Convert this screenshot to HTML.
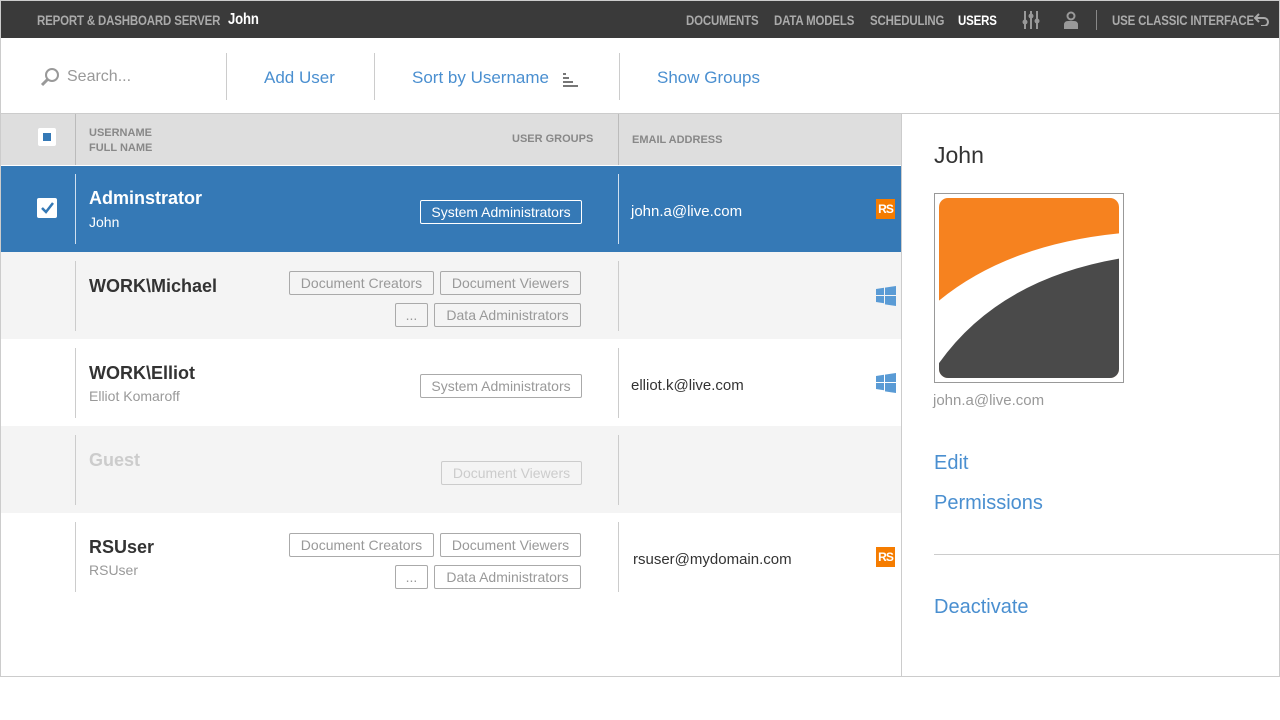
<!DOCTYPE html>
<html><head><style>
*{margin:0;padding:0;box-sizing:border-box}
body{width:1280px;height:720px;background:#fff;font-family:"Liberation Sans",sans-serif;position:relative;overflow:hidden}
.a{position:absolute;white-space:nowrap}
.nav{font-weight:bold;font-size:14px;color:#aaa;top:12px;transform:scaleX(0.82);transform-origin:0 0;letter-spacing:-0.2px}
.tb{font-size:17px;color:#4a8fd0;top:68px}
.vl{position:absolute;width:1px;background:#ccc}
.hd{font-size:11px;font-weight:bold;color:#888}
.tag{position:absolute;height:24px;border:1px solid #aaa;border-radius:2px;font-size:14px;color:#999;line-height:22px;text-align:center;background:transparent}
.un{font-size:18px;font-weight:bold;color:#333}
.fn{font-size:14px;color:#999}
.em{font-size:15px;color:#333}
</style></head><body>
<div class="a" style="left:0;top:0;width:1280px;height:677px;border:1px solid #ccc"></div>
<div class="a" style="left:1px;top:1px;width:1278px;height:37px;background:#3a3a3a"></div>
<div class="a nav" style="left:37px">REPORT &amp; DASHBOARD SERVER</div>
<div class="a nav" style="left:228px;color:#fff;font-size:16px;top:11px">John</div>
<div class="a nav" style="left:686px">DOCUMENTS</div>
<div class="a nav" style="left:774px">DATA MODELS</div>
<div class="a nav" style="left:870px">SCHEDULING</div>
<div class="a nav" style="left:958px;color:#fff">USERS</div>
<svg class="a" style="left:1021px;top:11px" width="20" height="18" viewBox="0 0 20 18" fill="#999"><rect x="3" y="0" width="2" height="18"/><rect x="9" y="0" width="2" height="18"/><rect x="15" y="0" width="2" height="18"/><circle cx="4" cy="11" r="2.5"/><circle cx="10" cy="5" r="2.5"/><circle cx="16" cy="10" r="2.5"/></svg>
<svg class="a" style="left:1063px;top:11px" width="16" height="18" viewBox="0 0 16 18" fill="#999"><circle cx="8" cy="5" r="3.5" fill="none" stroke="#999" stroke-width="2"/><path d="M1 18v-4q0-4 4-4h6q4 0 4 4v4z"/></svg>
<div class="a" style="left:1096px;top:10px;width:1px;height:20px;background:#888"></div>
<div class="a nav" style="left:1112px">USE CLASSIC INTERFACE</div>
<svg class="a" style="left:1254px;top:13px" width="16" height="13" viewBox="0 0 16 13"><path d="M5 1L1 5l4 4M1 5h9a4 4 0 010 8H7" fill="none" stroke="#aaa" stroke-width="2"/></svg>

<svg class="a" style="left:40px;top:67px" width="20" height="20" viewBox="0 0 20 20"><circle cx="12" cy="8" r="6" fill="none" stroke="#999" stroke-width="2"/><path d="M8 12l-6 6" stroke="#999" stroke-width="3"/></svg>
<div class="a" style="left:67px;top:68px;font-size:16px;color:#999">Search...</div>
<div class="vl" style="left:226px;top:53px;height:47px"></div>
<div class="a tb" style="left:264px">Add User</div>
<div class="vl" style="left:374px;top:53px;height:47px"></div>
<div class="a tb" style="left:412px">Sort by Username</div>
<svg class="a" style="left:563px;top:73px" width="16" height="14" fill="#777"><rect x="0" y="0" width="3" height="2"/><rect x="0" y="4" width="6" height="2"/><rect x="0" y="8" width="10" height="2"/><rect x="0" y="12" width="15" height="2"/></svg>
<div class="vl" style="left:619px;top:53px;height:47px"></div>
<div class="a tb" style="left:657px">Show Groups</div>
<div class="a" style="left:1px;top:113px;width:1278px;height:1px;background:#ccc"></div>

<div class="a" style="left:1px;top:114px;width:900px;height:51px;background:#dedede"></div>
<div class="a" style="left:38px;top:128px;width:18px;height:18px;background:#fff;border-radius:2px"></div>
<div class="a" style="left:43px;top:133px;width:8px;height:8px;background:#3579b6"></div>
<div class="vl" style="left:75px;top:114px;height:51px;background:#bbb"></div>
<div class="a hd" style="left:89px;top:126px;line-height:15px">USERNAME<br>FULL NAME</div>
<div class="a hd" style="left:512px;top:133px">USER GROUPS</div>
<div class="vl" style="left:618px;top:114px;height:51px;background:#bbb"></div>
<div class="a hd" style="left:632px;top:134px">EMAIL ADDRESS</div>

<div class="a" style="left:1px;top:166px;width:900px;height:86px;background:#3579b6"></div>
<div class="a" style="left:37px;top:198px;width:20px;height:20px;background:#fff;border-radius:2px"></div>
<svg class="a" style="left:39px;top:200px" width="16" height="16"><path d="M3 8l4 4 7-9" fill="none" stroke="#3579b6" stroke-width="2.5"/></svg>
<div class="vl" style="left:75px;top:174px;height:70px;background:#cfe0f0"></div>
<div class="a un" style="left:89px;top:188px;color:#fff">Adminstrator</div>
<div class="a fn" style="left:89px;top:214px;color:#fff">John</div>
<div class="tag" style="left:420px;top:200px;width:162px;border-color:#fff;color:#fff">System Administrators</div>
<div class="vl" style="left:618px;top:174px;height:70px;background:#cfe0f0"></div>
<div class="a em" style="left:631px;top:203px;color:#fff">john.a@live.com</div>
<div class="a" style="left:876px;top:199px;width:19px;height:20px;background:#f57c00;color:#fff;font:bold 12px 'Liberation Sans',sans-serif;line-height:20px;text-align:center;letter-spacing:-1px">RS</div>

<div class="a" style="left:1px;top:252px;width:900px;height:87px;background:#f4f4f4"></div>
<div class="vl" style="left:75px;top:261px;height:70px"></div>
<div class="a un" style="left:89px;top:276px">WORK\Michael</div>
<div class="tag" style="left:289px;top:271px;width:145px">Document Creators</div>
<div class="tag" style="left:440px;top:271px;width:141px">Document Viewers</div>
<div class="tag" style="left:395px;top:303px;width:33px">...</div>
<div class="tag" style="left:434px;top:303px;width:147px">Data Administrators</div>
<div class="vl" style="left:618px;top:261px;height:70px"></div>
<svg class="a" style="left:876px;top:286px" width="20" height="20" fill="#5a9bd5"><path d="M0 3l8-1.2V9H0zM9 1.6L20 0v9H9zM0 10h8v7.2L0 16zM9 10h11v10L9 18.4z"/></svg>

<div class="vl" style="left:75px;top:348px;height:70px"></div>
<div class="a un" style="left:89px;top:363px">WORK\Elliot</div>
<div class="a fn" style="left:89px;top:388px">Elliot Komaroff</div>
<div class="tag" style="left:420px;top:374px;width:162px">System Administrators</div>
<div class="vl" style="left:618px;top:348px;height:70px"></div>
<div class="a em" style="left:631px;top:377px">elliot.k@live.com</div>
<svg class="a" style="left:876px;top:373px" width="20" height="20" fill="#5a9bd5"><path d="M0 3l8-1.2V9H0zM9 1.6L20 0v9H9zM0 10h8v7.2L0 16zM9 10h11v10L9 18.4z"/></svg>

<div class="a" style="left:1px;top:426px;width:900px;height:87px;background:#f4f4f4"></div>
<div class="vl" style="left:75px;top:435px;height:70px"></div>
<div class="a un" style="left:89px;top:450px;color:#ccc">Guest</div>
<div class="tag" style="left:441px;top:461px;width:141px;color:#ccc;border-color:#ccc">Document Viewers</div>
<div class="vl" style="left:618px;top:435px;height:70px"></div>

<div class="vl" style="left:75px;top:522px;height:70px"></div>
<div class="a un" style="left:89px;top:537px">RSUser</div>
<div class="a fn" style="left:89px;top:562px">RSUser</div>
<div class="tag" style="left:289px;top:533px;width:145px">Document Creators</div>
<div class="tag" style="left:440px;top:533px;width:141px">Document Viewers</div>
<div class="tag" style="left:395px;top:565px;width:33px">...</div>
<div class="tag" style="left:434px;top:565px;width:147px">Data Administrators</div>
<div class="vl" style="left:618px;top:522px;height:70px"></div>
<div class="a em" style="left:633px;top:551px">rsuser@mydomain.com</div>
<div class="a" style="left:876px;top:547px;width:19px;height:20px;background:#f57c00;color:#fff;font:bold 12px 'Liberation Sans',sans-serif;line-height:20px;text-align:center;letter-spacing:-1px">RS</div>

<div class="vl" style="left:901px;top:114px;height:563px"></div>
<div class="a" style="left:934px;top:142px;font-size:23px;color:#333">John</div>
<div class="a" style="left:934px;top:193px;width:190px;height:190px;border:1px solid #999;background:#fff;overflow:hidden">
<svg width="188" height="188" viewBox="0 0 188 188"><defs><clipPath id="c"><rect x="4" y="4" width="180" height="180" rx="9"/></clipPath></defs><g clip-path="url(#c)"><rect x="0" y="0" width="188" height="188" fill="#f6821f"/><path d="M0 110Q70 50 188 39V188H0z" fill="#fff"/><path d="M0 175Q60 85 188 64V188H0z" fill="#4a4a4a"/></g></svg></div>
<div class="a" style="left:933px;top:392px;font-size:15px;color:#999">john.a@live.com</div>
<div class="a" style="left:934px;top:452px;font-size:20px;color:#4a8fd0">Edit</div>
<div class="a" style="left:934px;top:492px;font-size:20px;color:#4a8fd0">Permissions</div>
<div class="a" style="left:934px;top:554px;width:346px;height:1px;background:#ccc"></div>
<div class="a" style="left:934px;top:596px;font-size:20px;color:#4a8fd0">Deactivate</div>
</body></html>
